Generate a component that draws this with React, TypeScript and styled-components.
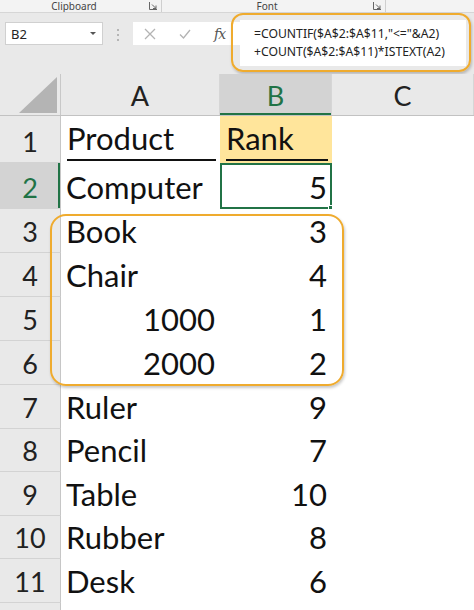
import React from 'react';
import styled, { createGlobalStyle } from 'styled-components';

const GREEN = '#217346';
const AMBER = '#efab2e';
const COLS = '61px 159px 112px 1fr';

const GlobalStyle = createGlobalStyle`
  html, body {
    margin: 0;
    padding: 0;
    background: #fff;
    overflow: hidden;
  }
`;

const Window = styled.div`
  width: 474px;
  height: 610px;
  overflow: hidden;
  display: flex;
  flex-direction: column;
  background: #fff;

  & > * {
    flex-shrink: 0;
  }
`;

/* ribbon group labels */
const Ribbon = styled.div`
  height: 13px;
  box-sizing: border-box;
  display: flex;
  overflow: hidden;
  background: #f3f3f3;
  border-bottom: 1px solid #d6d6d6;
  font-family: "Noto Sans", "Open Sans", sans-serif;
  font-size: 10px;
  color: #444;
`;

const RibbonGroup = styled.div<{ $w: number }>`
  width: ${p => p.$w}px;
  display: flex;
  align-items: center;
  border-right: 1px solid #cfcfcf;
`;

const GroupLabel = styled.span`
  flex: 1;
  text-align: center;
  line-height: 12px;
`;

const Launcher = styled.svg`
  width: 10px;
  height: 10px;
  margin: 0 3px 0 0;
`;

/* name box + formula input */
const FormulaBar = styled.div`
  position: relative;
  height: 61px;
  box-sizing: border-box;
  padding: 7px 0 0 5px;
  display: flex;
  align-items: flex-start;
  background: #e9e9e9;
`;

const NameBox = styled.div`
  width: 98px;
  height: 23px;
  margin-top: 2px;
  box-sizing: border-box;
  padding: 0 6px 0 5px;
  display: flex;
  align-items: center;
  justify-content: space-between;
  background: #fff;
  border: 1px solid #d0d0d0;
  font-family: "Noto Sans", "Open Sans", sans-serif;
  font-size: 13px;
  color: #222;
`;

const Caret = styled.span`
  width: 0;
  height: 0;
  border-left: 3px solid transparent;
  border-right: 3px solid transparent;
  border-top: 3px solid #555;
`;

const Grip = styled.div`
  width: 30px;
  margin-top: 9px;
  display: flex;
  flex-direction: column;
  align-items: center;
  gap: 3px;

  span {
    width: 2px;
    height: 2px;
    background: #b5b5b5;
  }
`;

const FxControls = styled.div`
  width: 107px;
  height: 23px;
  margin-top: 2px;
  padding-left: 11px;
  box-sizing: border-box;
  display: flex;
  align-items: center;
  gap: 23px;
  background: #fff;
`;

const FxLabel = styled.span`
  font-family: "DejaVu Serif", "Liberation Serif", serif;
  font-style: italic;
  font-size: 14px;
  color: #555;
  letter-spacing: -1px;
`;

const FormulaInput = styled.div`
  width: 226px;
  height: 46px;
  box-sizing: border-box;
  padding: 5px 0 0 14px;
  background: #fff;
  font-family: "Noto Sans", "Open Sans", sans-serif;
  font-size: 12.2px;
  line-height: 18px;
  color: #222;
  white-space: nowrap;
`;

const Callout = styled.div<{ $l: number; $t: number; $w: number; $h: number; $r: number }>`
  position: absolute;
  left: ${p => p.$l}px;
  top: ${p => p.$t}px;
  width: ${p => p.$w}px;
  height: ${p => p.$h}px;
  box-sizing: border-box;
  border: 2.5px solid ${AMBER};
  border-radius: ${p => p.$r}px;
  box-shadow: 1px 2px 3px rgba(0, 0, 0, 0.22);
  pointer-events: none;
`;

/* worksheet */
const Sheet = styled.div`
  position: relative;
  flex: 1;
  font-family: Lato, "Liberation Sans", sans-serif;
  color: #111;
`;

const HeaderRow = styled.div`
  height: 42px;
  box-sizing: border-box;
  display: grid;
  grid-template-columns: ${COLS};
  background: #e9e9e9;
  border-bottom: 1px solid #c2c2c2;
`;

const Corner = styled.div`
  border-right: 1px solid #c8c8c8;
  display: flex;
  align-items: flex-end;
  justify-content: flex-end;
  padding: 0 3px 2px 0;
`;

const ColHeader = styled.div<{ $active?: boolean }>`
  display: flex;
  align-items: flex-end;
  justify-content: center;
  padding-bottom: 6px;
  font-size: 27px;
  line-height: 1;
  border-right: 1px solid #d6d6d6;
  background: ${p => (p.$active ? '#d3d3d3' : 'transparent')};
  color: ${p => (p.$active ? GREEN : '#222')};
  box-shadow: ${p => (p.$active ? `inset 0 -2px 0 ${GREEN}` : 'none')};
`;

const Row = styled.div<{ $h: number }>`
  height: ${p => p.$h}px;
  display: grid;
  grid-template-columns: ${COLS};
`;

const RowHeader = styled.div<{ $active?: boolean }>`
  display: flex;
  align-items: flex-end;
  justify-content: center;
  padding-bottom: 7px;
  font-size: 27px;
  line-height: 1;
  box-sizing: border-box;
  border-bottom: 1px solid #d3d3d3;
  border-right: 1px solid #c6c6c6;
  background: ${p => (p.$active ? '#d3d3d3' : '#e9e9e9')};
  color: ${p => (p.$active ? GREEN : '#222')};
  box-shadow: ${p => (p.$active ? `inset -2px 0 0 ${GREEN}` : 'none')};
`;

const Cell = styled.div<{ $right?: boolean; $fill?: string; $selected?: boolean }>`
  position: relative;
  display: flex;
  align-items: flex-end;
  justify-content: ${p => (p.$right ? 'flex-end' : 'flex-start')};
  padding: 0 5px 6px 5px;
  font-size: 31px;
  line-height: 1;
  background: ${p => p.$fill || '#fff'};
  box-shadow: ${p => (p.$selected ? `inset 0 0 0 2px ${GREEN}` : 'none')};
`;

const FillHandle = styled.span`
  position: absolute;
  right: -3px;
  bottom: -3px;
  width: 5px;
  height: 5px;
  background: ${GREEN};
  border: 1px solid #fff;
`;

/* accounting-style underline that spans the cell */
const Underlined = styled.span`
  flex: 1;
  margin: 0 -1px -4px 1px;
  padding-bottom: 5px;
  border-bottom: 2px solid #111;
`;

type Entry = { n: number; a: string; b: string; aNum?: boolean; h: number };

const rows: Entry[] = [
  { n: 2, a: 'Computer', b: '5', h: 46 },
  { n: 3, a: 'Book', b: '3', h: 44 },
  { n: 4, a: 'Chair', b: '4', h: 44 },
  { n: 5, a: '1000', b: '1', aNum: true, h: 44 },
  { n: 6, a: '2000', b: '2', aNum: true, h: 44 },
  { n: 7, a: 'Ruler', b: '9', h: 43.6 },
  { n: 8, a: 'Pencil', b: '7', h: 43.6 },
  { n: 9, a: 'Table', b: '10', h: 43.6 },
  { n: 10, a: 'Rubber', b: '8', h: 43.6 },
  { n: 11, a: 'Desk', b: '6', h: 43.6 },
];

function LauncherIcon() {
  return (
    <Launcher viewBox="0 0 10 10">
      <path d="M1.5 1v7.5H9" fill="none" stroke="#666" strokeWidth="1" />
      <path d="M4 3.5l4 4M8 4.5v3H5" fill="none" stroke="#666" strokeWidth="1" />
    </Launcher>
  );
}

export default function App() {
  return (
    <Window>
      <GlobalStyle />
      <Ribbon>
        <RibbonGroup $w={161}>
          <GroupLabel>Clipboard</GroupLabel>
          <LauncherIcon />
        </RibbonGroup>
        <RibbonGroup $w={223}>
          <GroupLabel>Font</GroupLabel>
          <LauncherIcon />
        </RibbonGroup>
      </Ribbon>

      <FormulaBar>
        <NameBox>
          B2
          <Caret />
        </NameBox>
        <Grip>
          <span />
          <span />
          <span />
        </Grip>
        <FxControls>
          <svg width="12" height="12" viewBox="0 0 12 12">
            <path d="M1 1l10 10M11 1L1 11" stroke="#b3b3b3" strokeWidth="1.3" />
          </svg>
          <svg width="12" height="12" viewBox="0 0 12 12">
            <path d="M1 6.5l3.5 3.5L11 2" fill="none" stroke="#b3b3b3" strokeWidth="1.3" />
          </svg>
          <FxLabel>fx</FxLabel>
        </FxControls>
        <FormulaInput>
          =COUNTIF($A$2:$A$11,"&lt;="&amp;A2)
          <br />
          +COUNT($A$2:$A$11)*ISTEXT(A2)
        </FormulaInput>
        <Callout $l={231} $t={0} $w={240} $h={59} $r={12} />
      </FormulaBar>

      <Sheet>
        <HeaderRow>
          <Corner>
            <svg width="38" height="36" viewBox="0 0 38 36">
              <path d="M38 0V36H0Z" fill="#b4b4b4" />
            </svg>
          </Corner>
          <ColHeader>A</ColHeader>
          <ColHeader $active>B</ColHeader>
          <ColHeader>C</ColHeader>
        </HeaderRow>

        <Row $h={47}>
          <RowHeader>1</RowHeader>
          <Cell>
            <Underlined>Product</Underlined>
          </Cell>
          <Cell $fill="#ffe59b">
            <Underlined>Rank</Underlined>
          </Cell>
          <Cell />
        </Row>

        {rows.map(r => (
          <Row key={r.n} $h={r.h}>
            <RowHeader $active={r.n === 2}>{r.n}</RowHeader>
            <Cell $right={r.aNum}>{r.a}</Cell>
            <Cell $right $selected={r.n === 2}>
              {r.b}
              {r.n === 2 && <FillHandle />}
            </Cell>
            <Cell />
          </Row>
        ))}

        <Row $h={20}>
          <RowHeader />
          <Cell />
          <Cell />
          <Cell />
        </Row>

        <Callout $l={50} $t={140} $w={294} $h={172} $r={16} />
      </Sheet>
    </Window>
  );
}
